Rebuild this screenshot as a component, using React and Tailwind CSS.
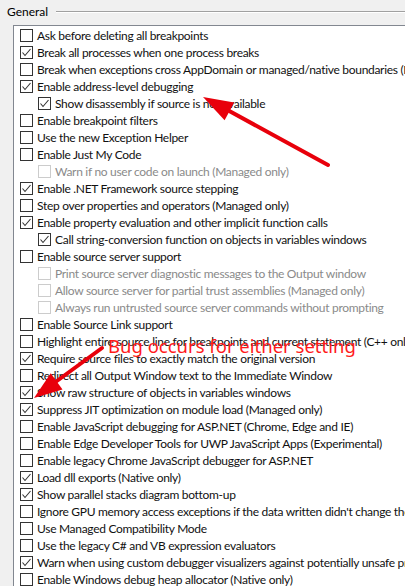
import React from "react";

// state: 0 = unchecked, 1 = checked, 2 = disabled
const options = [
  ["Ask before deleting all breakpoints", 0],
  ["Break all processes when one process breaks", 1],
  ["Break when exceptions cross AppDomain or managed/native boundaries (Managed only)", 0],
  ["Enable address-level debugging", 1],
  ["Show disassembly if source is not available", 1, true],
  ["Enable breakpoint filters", 0],
  ["Use the new Exception Helper", 0],
  ["Enable Just My Code", 0],
  ["Warn if no user code on launch (Managed only)", 2, true],
  ["Enable .NET Framework source stepping", 1],
  ["Step over properties and operators (Managed only)", 0],
  ["Enable property evaluation and other implicit function calls", 1],
  ["Call string-conversion function on objects in variables windows", 1, true],
  ["Enable source server support", 0],
  ["Print source server diagnostic messages to the Output window", 2, true],
  ["Allow source server for partial trust assemblies (Managed only)", 2, true],
  ["Always run untrusted source server commands without prompting", 2, true],
  ["Enable Source Link support", 0],
  ["Highlight entire source line for breakpoints and current statement (C++ only)", 0],
  ["Require source files to exactly match the original version", 1],
  ["Redirect all Output Window text to the Immediate Window", 0],
  ["Show raw structure of objects in variables windows", 1],
  ["Suppress JIT optimization on module load (Managed only)", 1],
  ["Enable JavaScript debugging for ASP.NET (Chrome, Edge and IE)", 0],
  ["Enable Edge Developer Tools for UWP JavaScript Apps (Experimental)", 0],
  ["Enable legacy Chrome JavaScript debugger for ASP.NET", 0],
  ["Load dll exports (Native only)", 1],
  ["Show parallel stacks diagram bottom-up", 1],
  ["Ignore GPU memory access exceptions if the data written didn't change the value", 0],
  ["Use Managed Compatibility Mode", 0],
  ["Use the legacy C# and VB expression evaluators", 0],
  ["Warn when using custom debugger visualizers against potentially unsafe processes", 1],
  ["Enable Windows debug heap allocator (Native only)", 0],
];

function Box({ state }) {
  const disabled = state === 2;
  return (
    <span
      className={`w-[13px] h-[13px] shrink-0 border bg-white flex items-center justify-center ${
        disabled ? "border-[#cccccc]" : "border-[#333333]"
      }`}
    >
      {state === 1 && (
        <svg width="11" height="11" viewBox="0 0 11 11">
          <polyline points="1.5,5.5 4,8.5 9.5,2" fill="none" stroke="#333" strokeWidth="1.1" />
        </svg>
      )}
    </span>
  );
}

export default function App() {
  return (
    <div
      className="relative w-[405px] h-[586px] overflow-hidden bg-[#f0f0f0] text-[12px]"
      style={{ fontFamily: 'Lato, "Noto Sans", sans-serif' }}
    >
      {/* group header */}
      <div className="flex items-center h-[25px] pl-[7px] pb-[2px]">
        <span className="text-black leading-none">General</span>
        <div className="flex-1 ml-[8px] h-[1px] bg-[#a0a0a0] border-b border-white box-content" />
      </div>

      {/* list */}
      <div className="ml-[13px] border-l border-t border-[#828790] bg-white pt-[1px] whitespace-nowrap tracking-[-0.3px]">
        {options.map(([label, state, indent], i) => (
          <div
            key={i}
            className={`flex items-center h-[17px] gap-[4px] ${indent ? "pl-[24px]" : "pl-[6px]"}`}
          >
            <Box state={state} />
            <span className={state === 2 ? "text-[#8a8a8a]" : "text-[#111]"}>{label}</span>
          </div>
        ))}
      </div>

      {/* red annotation */}
      <svg className="absolute left-0 top-0 pointer-events-none" width="405" height="586">
        <line x1="328" y1="165" x2="222" y2="107" stroke="#e8000b" strokeWidth="4" strokeLinecap="round" />
        <polygon points="203,97 224.6,120.2 234.2,102.6" fill="#e8000b" />
        <line x1="102" y1="348" x2="50" y2="386" stroke="#e8000b" strokeWidth="4" strokeLinecap="round" />
        <polygon points="34,398 62.5,389.5 50.7,373.3" fill="#e8000b" />
      </svg>
      <div
        className="absolute left-[108px] top-[337px] text-[18.5px] leading-none text-[#ff1a1a] whitespace-nowrap"
        style={{ fontFamily: '"Noto Sans", sans-serif' }}
      >
        Bug occurs for either setting
      </div>
    </div>
  );
}
